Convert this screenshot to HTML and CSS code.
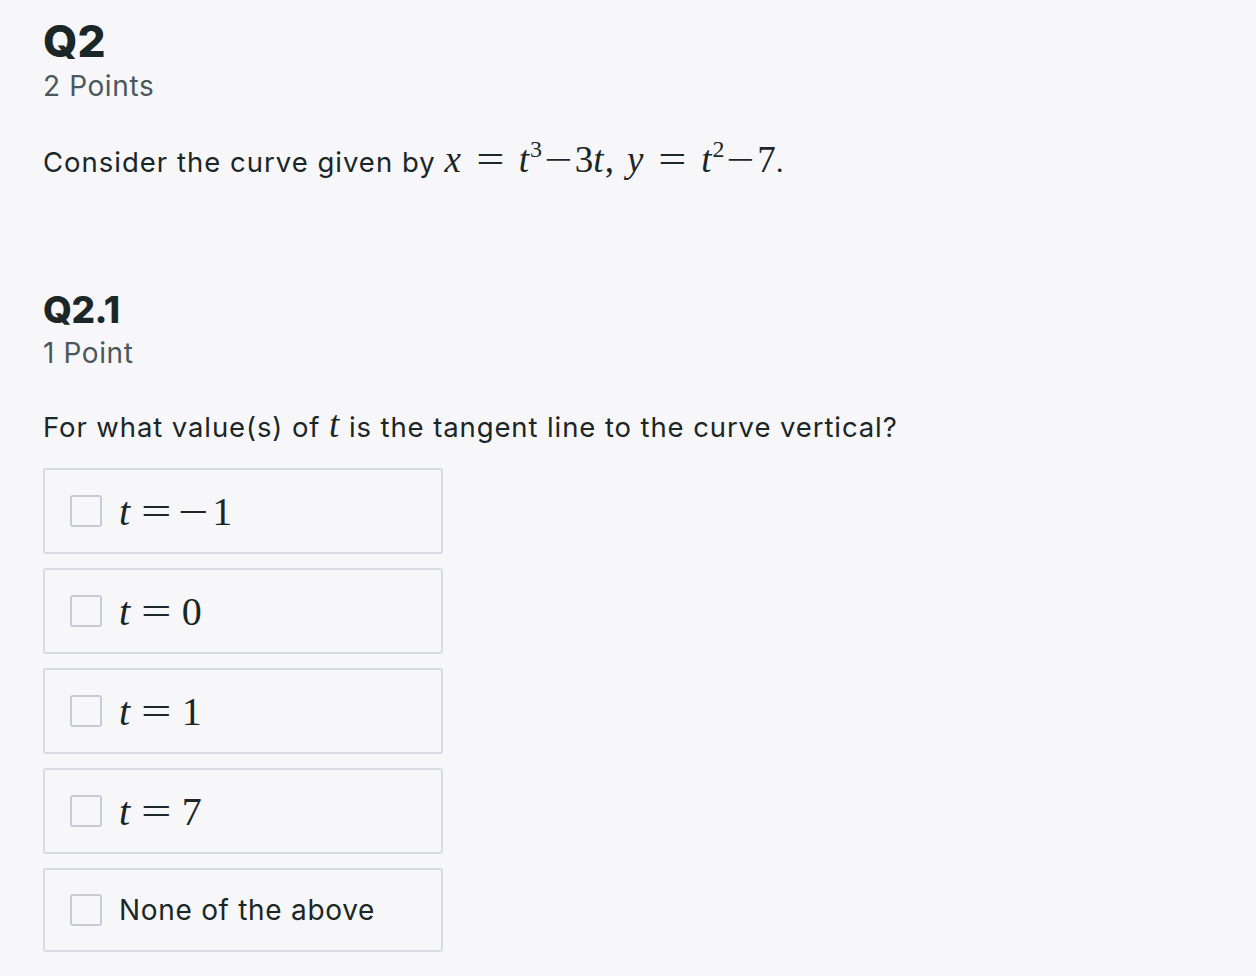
FILE: index.html
```html
<!DOCTYPE html>
<html>
<head>
<meta charset="utf-8">
<link rel="stylesheet" href="styles.css">
</head>
<body>
<main class="page">
  <section class="question">
    <h2 class="q-title main">Q2</h2>
    <div class="q-points">2 Points</div>
    <p class="q-text">Consider the curve given by <span class="math"><i>x</i><span class="op">=</span><i>t</i><sup>3</sup><span class="bin">−</span>3<i>t</i>,<span class="sp"></span><i>y</i><span class="op">=</span><i>t</i><sup>2</sup><span class="bin">−</span>7</span>.</p>
  </section>
  <section class="question sub">
    <h3 class="q-title">Q2.1</h3>
    <div class="q-points">1 Point</div>
    <p class="q-text">For what value(s) of <span class="math"><i>t</i></span> is the tangent line to the curve vertical?</p>
    <ul class="options">
      <li class="option"><span class="box"></span><span class="math big"><i>t</i><span class="op">=</span><span class="neg">−</span>1</span></li>
      <li class="option"><span class="box"></span><span class="math big"><i>t</i><span class="op">=</span>0</span></li>
      <li class="option"><span class="box"></span><span class="math big"><i>t</i><span class="op">=</span>1</span></li>
      <li class="option"><span class="box"></span><span class="math big"><i>t</i><span class="op">=</span>7</span></li>
      <li class="option last"><span class="box"></span><span class="label">None of the above</span></li>
    </ul>
  </section>
</main>
</body>
</html>
```
FILE: styles.css
```css
html, body {
  margin: 0;
  padding: 0;
  background: #f7f7f9;
}
body {
  font-family: Inter, "Open Sans", sans-serif;
  color: #1b2627;
}
.page {
  padding: 16px 43px 0;
}
.q-title {
  margin: 0;
  font-size: 37px;
  font-weight: 800;
  line-height: 46px;
  color: #1b2627;
  letter-spacing: -0.5px;
}
.q-title.main {
  font-size: 44px;
  line-height: 50px;
  letter-spacing: 0;
}
.q-points {
  font-size: 28px;
  line-height: 36px;
  color: #4a585b;
  margin-top: 2px;
  letter-spacing: 0.6px;
}
.q-text {
  margin: 36px 0 0;
  font-size: 27.5px;
  line-height: 40px;
  letter-spacing: 1px;
}
.sub {
  margin-top: 105px;
}
.sub .q-text {
  margin-top: 34px;
  letter-spacing: 0.9px;
}
.math {
  font-family: "Liberation Serif", "DejaVu Serif", serif;
  font-size: 37px;
  letter-spacing: 0;
}
.math i {
  font-style: italic;
  padding-right: 1px;
}
.math sup {
  font-size: 24px;
  line-height: 0;
  vertical-align: 15px;
}
.op, .bin, .neg {
  display: inline-block;
  transform: scaleX(1.35);
}
.op {
  margin: 0 18px;
}
.bin {
  margin: 0 6px;
}
.sp {
  display: inline-block;
  width: 13px;
}
.options {
  list-style: none;
  margin: 21px 0 0;
  padding: 0;
  display: flex;
  flex-direction: column;
  gap: 14px;
}
.option {
  box-sizing: border-box;
  width: 400px;
  height: 86px;
  border: 2px solid #d8dce1;
  border-radius: 3px;
  display: flex;
  align-items: center;
  padding-left: 25px;
  gap: 17px;
}
.option.last {
  height: 84px;
}
.box {
  box-sizing: border-box;
  width: 32px;
  height: 32px;
  border: 2px solid #c6ccd4;
  border-radius: 3px;
  background: #f7f7f9;
  flex: none;
}
.big {
  font-size: 40px;
}
.big .op {
  margin: 0 14px;
}
.neg {
  margin-right: 8px;
}
.label {
  font-size: 28px;
  letter-spacing: 0.7px;
}
```
